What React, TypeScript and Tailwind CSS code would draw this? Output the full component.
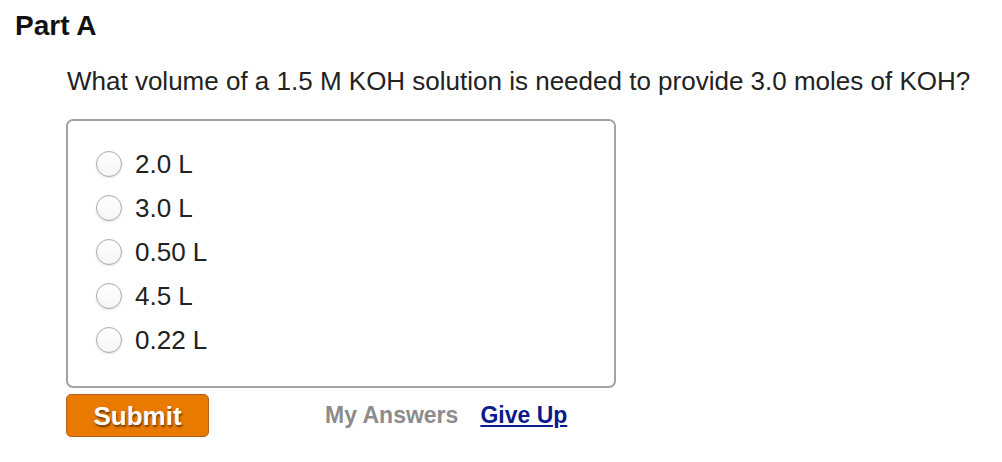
import { useState } from 'react'

const options = ['2.0 L', '3.0 L', '0.50 L', '4.5 L', '0.22 L']

export default function App() {
  const [picked, setPicked] = useState<number | null>(null)

  return (
    <div className="w-[1002px] h-[462px] bg-white text-[#222] font-['Liberation_Sans',Arial,sans-serif]">
      <h2 className="pl-[15px] pt-[10px] text-[28px] leading-[32px] font-bold text-[#111]">Part A</h2>

      <div className="pl-[67px] pt-[24px]">
        <p className="text-[26px] leading-[30px]">What volume of a 1.5 M KOH solution is needed to provide 3.0 moles of KOH?</p>

        <div className="mt-[23px] w-[550px] h-[269px] -ml-px rounded-[7px] border-2 border-[#a3a3a3] pt-[21px] pl-[28px]">
          {options.map((o, i) => (
            <label key={o} onClick={() => setPicked(i)} className="flex items-center h-[44px] cursor-pointer">
              <span className="w-[26px] h-[26px] rounded-full border border-[#a8a8a8] bg-gradient-to-b from-white to-[#f6f6f6] shadow-[0_1px_2px_rgba(0,0,0,0.12)] flex items-center justify-center">
                {picked === i && <span className="w-[10px] h-[10px] rounded-full bg-[#333]" />}
              </span>
              <span className="ml-[13px] text-[26px] leading-[30px]">{o}</span>
            </label>
          ))}
        </div>

        <div className="flex items-center mt-[6px] -ml-px">
          <button className="w-[143px] h-[43px] rounded-[5px] bg-[#e97a00] border border-[#b5601c] text-white text-[26px] leading-[30px] font-bold [text-shadow:1px_2px_2px_rgba(80,35,0,0.75)]">
            Submit
          </button>
          <span className="ml-[116px] text-[23px] font-bold text-[#8c8c8c]">My Answers</span>
          <a href="#" className="ml-[22px] text-[23px] font-bold text-[#0a1a8c] underline">Give Up</a>
        </div>
      </div>
    </div>
  )
}
